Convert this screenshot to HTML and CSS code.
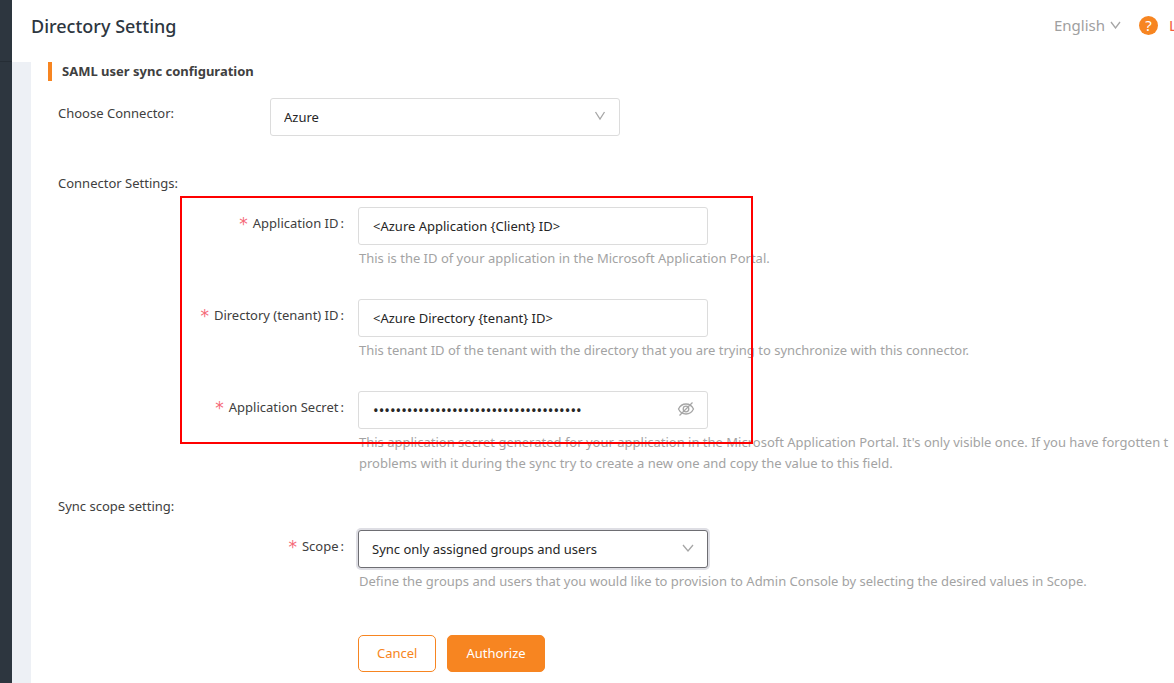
FILE: index.html
```
<!DOCTYPE html>
<html lang="en">
<head>
    <meta charset="UTF-8">
    <title>Directory Setting</title>
    <meta name="viewport" content="width=device-width, initial-scale=1.0">
    <link rel="stylesheet" href="styles.css">
</head>
<body>
    <div class="side-nav"><div class="side-logo"></div></div>

    <div class="page">
        <!-- Top bar -->
        <header class="top-bar">
            <h1>Directory Setting</h1>
            <div class="top-actions">
                <button type="button" class="language">English
                    <svg width="11" height="8" viewBox="0 0 11 8"><path d="M1 1l4.500 6 4.500-6"/></svg>
                </button>
                <a href="#" class="help" aria-label="Help">?</a>
                <a href="#" class="logout">L</a>
            </div>
        </header>

        <!-- Settings panel -->
        <main class="content">
            <form class="panel">
                <h2>SAML user sync configuration</h2>

                <div class="connector-row">
                    <label for="connector">Choose Connector:</label>
                    <div class="control">
                        <select id="connector"><option>Azure</option></select>
                        <svg class="arrow" width="12" height="10" viewBox="0 0 12 10"><path d="M1.500 1l4.500 7 4.500-7"/></svg>
                    </div>
                </div>

                <p class="section-title">Connector Settings:</p>
                <section class="fields">
                    <div class="field">
                        <label for="appId"><span class="required">*</span>Application ID<span class="colon">:</span></label>
                        <div class="field-body">
                            <div class="control">
                                <input type="text" id="appId" value="&lt;Azure Application {Client} ID&gt;">
                            </div>
                            <p class="hint">This is the ID of your application in the Microsoft Application Portal.</p>
                        </div>
                    </div>
                    <div class="field">
                        <label for="tenantId"><span class="required">*</span>Directory (tenant) ID<span class="colon">:</span></label>
                        <div class="field-body">
                            <div class="control">
                                <input type="text" id="tenantId" value="&lt;Azure Directory {tenant} ID&gt;">
                            </div>
                            <p class="hint">This tenant ID of the tenant with the directory that you are trying to synchronize with this connector.</p>
                        </div>
                    </div>
                    <div class="field">
                        <label for="secret"><span class="required">*</span>Application Secret<span class="colon">:</span></label>
                        <div class="field-body">
                            <div class="control">
                                <input type="password" id="secret" value="0000000000000000000000000000000000000">
                                <button type="button" class="reveal" aria-label="Show secret">
                                    <svg width="18" height="16" viewBox="0 0 18 16">
                                        <path d="M1.500 8C3 5 5.500 3 9 3s6 2 7.500 5c-1.500 3-4 5-7.500 5S3 11 1.500 8z"/>
                                        <circle cx="9" cy="8" r="2.800"/>
                                        <path d="M2.500 14.500l13-13"/>
                                    </svg>
                                </button>
                            </div>
                            <p class="hint">This application secret generated for your application in the Microsoft Application Portal. It's only visible once. If you have forgotten t<br>problems with it during the sync try to create a new one and copy the value to this field.</p>
                        </div>
                    </div>
                    <div class="highlight"></div>
                </section>

                <p class="section-title">Sync scope setting:</p>
                <section class="fields">
                    <div class="field">
                        <label for="scope"><span class="required">*</span>Scope<span class="colon">:</span></label>
                        <div class="field-body">
                            <div class="control active">
                                <select id="scope"><option>Sync only assigned groups and users</option></select>
                                <svg class="arrow" width="12" height="10" viewBox="0 0 12 10"><path d="M1 2l5 6 5-6"/></svg>
                            </div>
                            <p class="hint">Define the groups and users that you would like to provision to Admin Console by selecting the desired values in Scope.</p>
                        </div>
                    </div>
                </section>

                <div class="buttons">
                    <button type="button" class="btn">Cancel</button>
                    <button type="submit" class="btn btn-primary">Authorize</button>
                </div>
            </form>
        </main>
    </div>
</body>
</html>
```
FILE: styles.css
```
:root {
    --orange: #f78521;
    --nav-bg: #2d363f;
    --page-bg: #edf0f5;
    --border: #dcdcdc;
    --text-color: #404040;
    --hint-color: #a3a3a3;
    --label-end: 313px;
}

* {
    box-sizing: border-box;
}

body {
    margin: 0;
    min-height: 100vh;
    display: flex;
    overflow: hidden;
    background: var(--page-bg);
    color: var(--text-color);
    font-family: "Noto Sans", "Open Sans", sans-serif;
    font-size: 13px;
    line-height: 21px;
}

h1, h2, p {
    margin: 0;
}

svg {
    fill: none;
    stroke: #a6a6a6;
    stroke-width: 1.3;
}

.side-nav {
    flex: 0 0 12px;
    background: var(--nav-bg);
}

.side-logo {
    height: 62px;
    border-bottom: 1px solid #252d35;
}

.page {
    flex: 1;
    min-width: 0;
    display: flex;
    flex-direction: column;
}

.top-bar {
    height: 62px;
    padding-left: 19px;
    display: flex;
    justify-content: space-between;
    align-items: center;
    padding-bottom: 10px;
    background: #fff;
}

.top-bar h1 {
    font-size: 18px;
    font-weight: 500;
    color: #2d363f;
}

.top-actions {
    display: flex;
    align-items: center;
    padding-bottom: 2px;
    font-size: 15px;
}

.language {
    display: flex;
    align-items: center;
    gap: 5px;
    padding: 0;
    margin-right: 18px;
    border: none;
    background: none;
    color: #a0a0a0;
    font: inherit;
    cursor: pointer;
}

.help {
    width: 19px;
    height: 19px;
    margin-right: 11px;
    border-radius: 50%;
    background: var(--orange);
    color: #fff;
    font-size: 15px;
    line-height: 19px;
    text-align: center;
    text-decoration: none;
}

.logout {
    width: 5px;
    overflow: hidden;
    color: #f5593d;
    text-decoration: none;
}

.content {
    flex: 1;
    display: flex;
    padding-left: 19px;
}

.panel {
    flex: 1;
    min-width: 0;
    padding-bottom: 11px;
    background: #fff;
}

.panel h2 {
    margin-left: 17px;
    padding-left: 10px;
    border-left: 4px solid var(--orange);
    font-size: 13px;
    line-height: 19px;
}

.connector-row {
    display: flex;
    align-items: flex-start;
    margin: 17px 0 37px 27px;
}

.connector-row label {
    width: 212px;
    padding-top: 5px;
}

.section-title {
    margin-left: 27px;
}

.fields {
    position: relative;
    display: flex;
    flex-direction: column;
    gap: 30px;
    padding: 13px 0 22px;
}

.field {
    display: flex;
}

.field label {
    flex: 0 0 var(--label-end);
    padding-top: 6px;
    text-align: right;
}

.field-body {
    margin-left: 14px;
    white-space: nowrap;
}

.required {
    margin-right: 5px;
    color: #f56878;
    font-family: "DejaVu Sans", sans-serif;
    font-size: 17px;
    line-height: 16px;
    vertical-align: -2px;
}

.colon {
    margin-left: 2px;
}

.control {
    position: relative;
    width: 350px;
    height: 38px;
}

.control input,
.control select {
    width: 100%;
    height: 100%;
    padding: 0 14px;
    border: 1px solid var(--border);
    border-radius: 3px;
    background: #fff;
    color: #262626;
    font: inherit;
    outline: none;
}

.control input[type="password"] {
    font-size: 15px;
}

.control select {
    padding: 0 13px;
    appearance: none;
}

.control.active select {
    border-color: #6e6e73;
    box-shadow: 0 0 0 2px #dedee4;
}

.arrow {
    position: absolute;
    top: 13px;
    right: 14px;
    pointer-events: none;
}

.reveal {
    position: absolute;
    top: 10px;
    right: 13px;
    display: flex;
    padding: 0;
    border: none;
    background: none;
    cursor: pointer;
}

.hint {
    padding: 3px 0 0 1px;
    line-height: 21px;
    color: var(--hint-color);
}

/* Marks the values that come from the Azure portal */
.highlight {
    position: absolute;
    top: 2px;
    left: 149px;
    width: 573px;
    height: 248px;
    border: 2px solid #f00;
    pointer-events: none;
}

.buttons {
    display: flex;
    gap: 11px;
    margin-left: 327px;
    padding-top: 21px;
}

.btn {
    height: 37px;
    padding: 0 18px;
    border: 1px solid var(--orange);
    border-radius: 5px;
    background: #fff;
    color: var(--orange);
    font: inherit;
    cursor: pointer;
}

.btn-primary {
    background: var(--orange);
    color: #fff;
}
```
